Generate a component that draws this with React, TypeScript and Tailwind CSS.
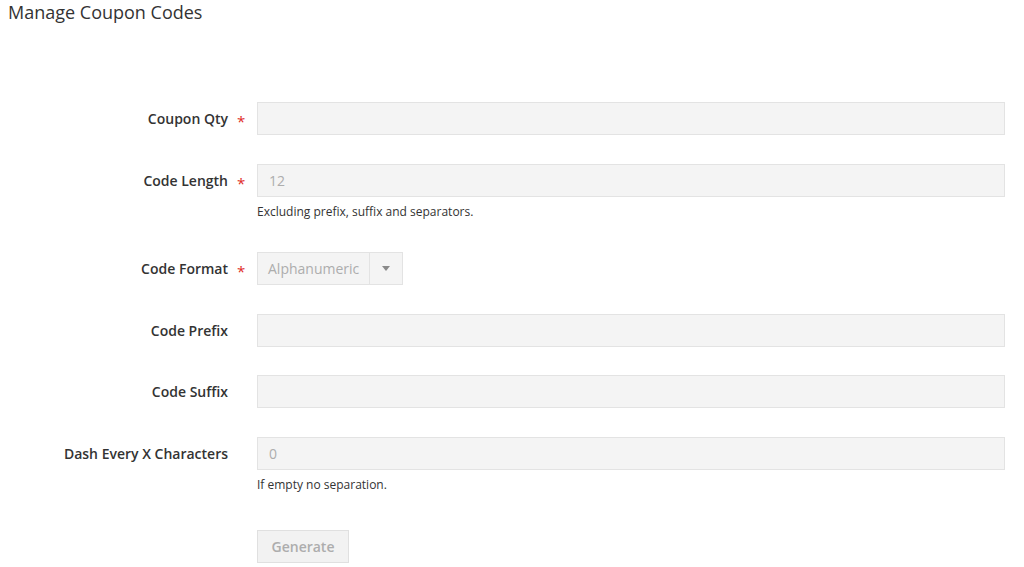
import React from 'react'

type Field = {
  label: string
  required?: boolean
  value?: string
  note?: string
  kind?: 'text' | 'select'
  gap: string
}

const fields: Field[] = [
  { label: 'Coupon Qty', required: true, gap: 'mb-[29px]' },
  { label: 'Code Length', required: true, value: '12', note: 'Excluding prefix, suffix and separators.', gap: 'mb-[31px]' },
  { label: 'Code Format', required: true, value: 'Alphanumeric', kind: 'select', gap: 'mb-[29px]' },
  { label: 'Code Prefix', gap: 'mb-[28px]' },
  { label: 'Code Suffix', gap: 'mb-[29px]' },
  { label: 'Dash Every X Characters', value: '0', note: 'If empty no separation.', gap: 'mb-[36px]' },
]

function Row({ f }: { f: Field }) {
  return (
    <div className={`flex items-start pr-[19px] ${f.gap}`}>
      <div className="w-[228px] h-[33px] flex items-center justify-end text-[14px] font-semibold text-[#333] whitespace-nowrap">
        {f.label}
      </div>
      <div className="w-[29px] h-[33px] flex items-center pl-[9px] pt-[5px]">
        {f.required && <span className="text-[15px] text-[#e02b27] leading-none">*</span>}
      </div>
      <div className="flex-1 flex flex-col">
        {f.kind === 'select' ? (
          <div className="w-[146px] h-[33px] flex border border-[#e3e3e3] bg-[#f4f4f4]">
            <div className="flex-1 flex items-center pl-[10px] text-[14px] text-[#adadad]">{f.value}</div>
            <div className="w-[33px] flex items-center justify-center border-l border-[#e3e3e3]">
              <svg width="8" height="5" viewBox="0 0 8 5"><path d="M0 0h8L4 5z" fill="#8a8a8a" /></svg>
            </div>
          </div>
        ) : (
          <div className="h-[33px] flex items-center border border-[#e3e3e3] bg-[#f4f4f4] pl-[11px] text-[14px] text-[#adadad]">
            {f.value}
          </div>
        )}
        {f.note && <div className="mt-[6px] text-[12px] leading-[18px] text-[#333]">{f.note}</div>}
      </div>
    </div>
  )
}

export default function App() {
  return (
    <div className="w-[1024px] h-[567px] bg-white overflow-hidden" style={{ fontFamily: '"Open Sans", sans-serif' }}>
      <h1 className="pl-[8px] text-[18px] leading-[24px] text-[#333]">Manage Coupon Codes</h1>
      <div className="mt-[78px] flex flex-col">
        {fields.map(f => <Row key={f.label} f={f} />)}
        <div className="pl-[257px]">
          <button className="w-[92px] h-[33px] border border-[#e0e0e0] bg-[#f2f2f2] text-[14px] font-semibold text-[#adadad]">
            Generate
          </button>
        </div>
      </div>
    </div>
  )
}
